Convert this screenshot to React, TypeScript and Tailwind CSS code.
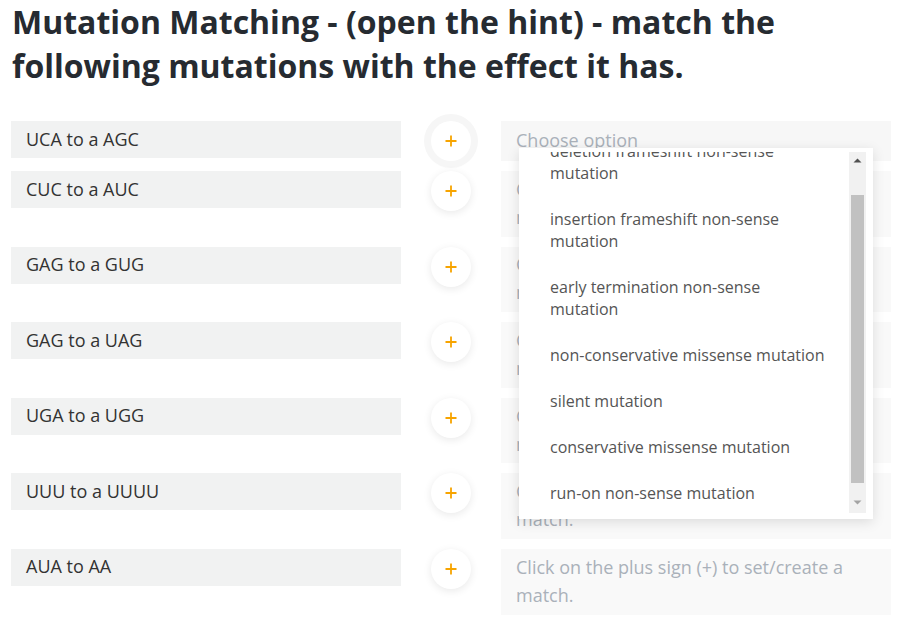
import React from 'react';

const rows = [
  'UCA to a AGC',
  'CUC to a AUC',
  'GAG to a GUG',
  'GAG to a UAG',
  'UGA to a UGG',
  'UUU to a UUUU',
  'AUA to AA',
];

const options = [
  'deletion frameshift non-sense mutation',
  'insertion frameshift non-sense mutation',
  'early termination non-sense mutation',
  'non-conservative missense mutation',
  'silent mutation',
  'conservative missense mutation',
  'run-on non-sense mutation',
];

const font = { fontFamily: '"Open Sans", "Liberation Sans", sans-serif' };

const PlusButton = ({ focused }: { focused?: boolean }) => (
  <button
    className={`w-[40px] h-[40px] rounded-full bg-white flex items-center justify-center ${
      focused
        ? 'shadow-[0_0_0_7px_#f6f6f6,0_2px_8px_rgba(0,0,0,0.06)]'
        : 'shadow-[0_2px_8px_rgba(0,0,0,0.09)]'
    }`}
  >
    <svg width="12" height="12" viewBox="0 0 12 12">
      <path d="M6 0.5V11.5M0.5 6H11.5" stroke="#f7a400" strokeWidth="1.8" />
    </svg>
  </button>
);

const Dropdown = () => (
  <div className="absolute left-[18px] top-[27px] w-[354px] h-[371px] bg-white z-10 shadow-[0_3px_12px_rgba(0,0,0,0.12)] pt-[4px] pb-[6px] pr-[7px]">
    <div className="relative h-full overflow-hidden">
      <div className="mt-[-24px]">
        {options.map((o) => (
          <div key={o} className="pl-[31px] pr-[38px] py-[12px] text-[16px] leading-[22px] text-[#555555]">
            {o}
          </div>
        ))}
      </div>
      {/* scrollbar */}
      <div className="absolute right-0 top-0 bottom-0 w-[17px] bg-[#f1f1f1]">
        <svg className="absolute left-[4px] top-[6px]" width="9" height="5" viewBox="0 0 9 5">
          <path d="M0.5 4.5L4.5 0.5L8.5 4.5Z" fill="#505050" />
        </svg>
        <div className="absolute left-[2px] right-[2px] top-[43px] h-[288px] bg-[#c1c1c1]" />
        <svg className="absolute left-[4px] bottom-[8px]" width="9" height="5" viewBox="0 0 9 5">
          <path d="M0.5 0.5L4.5 4.5L8.5 0.5Z" fill="#a3a3a3" />
        </svg>
      </div>
    </div>
  </div>
);

export default function App() {
  return (
    <div className="w-[909px] h-[620px] bg-white overflow-hidden" style={font}>
      <h1 className="pl-[12px] pr-[20px] text-[32px] leading-[44px] font-bold text-[#262b31]">
        Mutation Matching - (open the hint) - match the following mutations with the effect it has.
      </h1>
      <div className="mt-[33px] pl-[11px] flex flex-col gap-[10px]">
        {rows.map((r, i) => (
          <div key={r} className="flex items-start">
            <div className="w-[390px] h-[37px] bg-[#f1f2f2] pl-[15px] pb-[2px] flex items-center text-[18px] leading-[28px] text-[#333333]">
              {r}
            </div>
            <div className="w-[100px] flex justify-center">
              <PlusButton focused={i === 0} />
            </div>
            {i === 0 ? (
              <div className="relative w-[390px] h-[40px] bg-[#f7f7f7] pl-[15px] pb-[2px] flex items-center text-[18px] leading-[28px] text-[#aab1ba]">
                Choose option
                <Dropdown />
              </div>
            ) : (
              <div className="w-[390px] bg-[#f9f9f9] pl-[15px] pr-[20px] pt-[3.8px] pb-[5.8px] text-[18px] leading-[28px] text-[#aab1ba]">
                Click on the plus sign (+) to set/create a match.
              </div>
            )}
          </div>
        ))}
      </div>
    </div>
  );
}
